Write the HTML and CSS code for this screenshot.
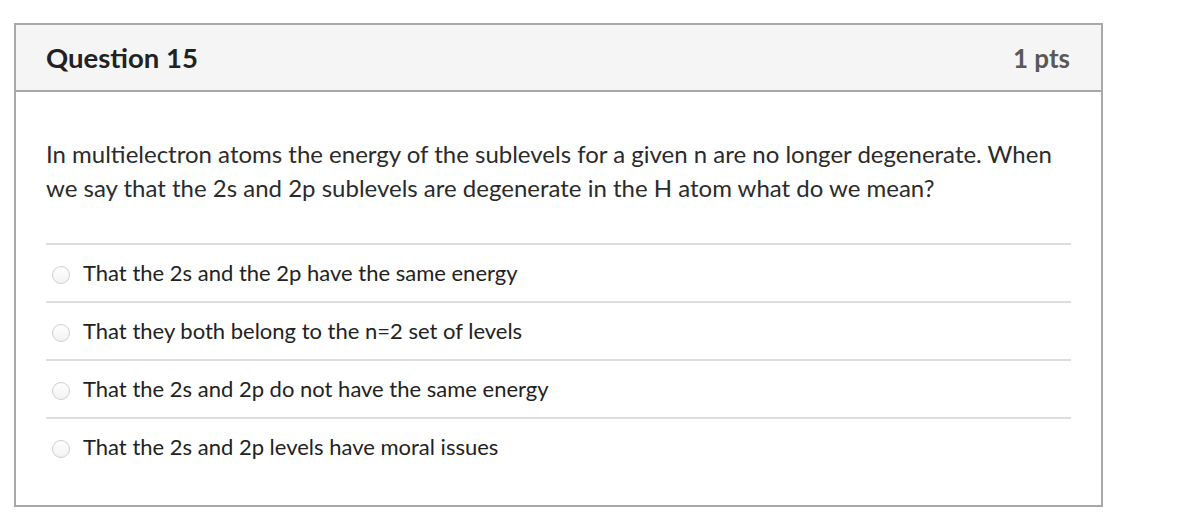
FILE: index.html
```html
<!DOCTYPE html>
<html>
<head>
<meta charset="utf-8">
<link rel="stylesheet" href="styles.css">
</head>
<body>
<div class="question">
  <div class="q-header">
    <div class="q-title">Question 15</div>
    <div class="q-points">1 pts</div>
  </div>
  <div class="q-body">
    <p class="q-text">In multielectron atoms the energy of the sublevels for a given n are no longer degenerate. When we say that the 2s and 2p sublevels are degenerate in the H atom what do we mean?</p>
    <div class="answers">
      <label class="answer"><span class="radio"></span><span class="answer-text">That the 2s and the 2p have the same energy</span></label>
      <label class="answer"><span class="radio"></span><span class="answer-text">That they both belong to the n=2 set of levels</span></label>
      <label class="answer"><span class="radio"></span><span class="answer-text">That the 2s and 2p do not have the same energy</span></label>
      <label class="answer"><span class="radio"></span><span class="answer-text">That the 2s and 2p levels have moral issues</span></label>
    </div>
  </div>
</div>
</body>
</html>
```
FILE: styles.css
```css
html, body {
  margin: 0;
  padding: 0;
  background: #fff;
}
body {
  font-family: Lato, "Open Sans", sans-serif;
  color: #2d2d2d;
  padding: 23px 0 0 14px;
}
.question {
  width: 1085px;
  border: 2px solid #a8a8a8;
  background: #fff;
}
.q-header {
  display: flex;
  justify-content: space-between;
  align-items: center;
  height: 65px;
  padding: 0 31px 0 30px;
  background: #f5f5f5;
  border-bottom: 2px solid #a8a8a8;
}
.q-title {
  font-size: 27.5px;
  font-weight: 700;
  color: #222;
}
.q-points {
  font-size: 26px;
  font-weight: 700;
  color: #585858;
}
.q-body {
  padding: 45px 30px 30px 30px;
}
.q-text {
  margin: 0;
  font-size: 24px;
  line-height: 34px;
  color: #2b2b2b;
}
.answers {
  margin-top: 38px;
}
.answer {
  display: flex;
  align-items: center;
  height: 56px;
  border-top: 2px solid #dddddd;
  padding-left: 6px;
  font-size: 22px;
  color: #222;
}
.answer-text {
  margin-top: -2px;
}
.radio {
  width: 16px;
  height: 16px;
  border-radius: 50%;
  border: 1px solid #cfcfcf;
  background: linear-gradient(#ffffff, #f2f2f2);
  margin: 2px 13px -2px 0;
  flex: none;
}
```
